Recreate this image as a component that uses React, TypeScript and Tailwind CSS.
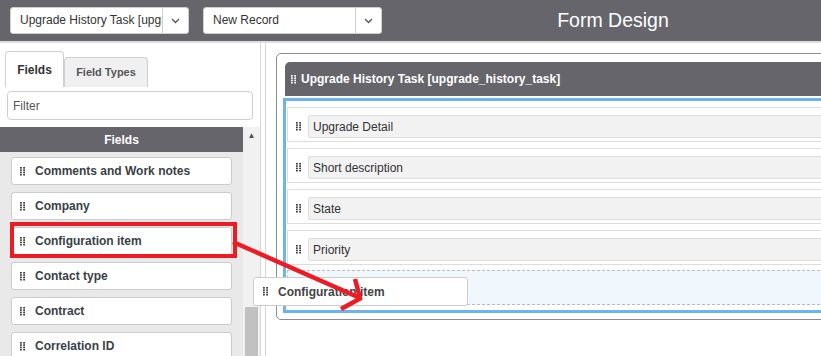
import * as React from "react"

const DARK = "bg-[#66656b]"

function Grip({ color = "#3c3c3c" }: { color?: string }) {
  const dots: React.ReactElement[] = []
  for (let r = 0; r < 4; r++) {
    for (let c = 0; c < 2; c++) {
      dots.push(<rect key={`${r}-${c}`} x={c * 3.2} y={r * 2.3} width={1.8} height={1.6} fill={color} />)
    }
  }
  return (
    <svg width="5" height="9" viewBox="0 0 5 9" className="shrink-0">
      {dots}
    </svg>
  )
}

function Chevron() {
  return (
    <svg width="9" height="6" viewBox="0 0 9 6">
      <path d="M1 1 L4.5 4.5 L8 1" fill="none" stroke="#555" strokeWidth="1.3" />
    </svg>
  )
}

function Select({ label }: { label: string }) {
  return (
    <div className="flex h-[27px] w-[179px] overflow-hidden rounded-[3px] border border-[#cfcfcf] bg-white">
      <div className="min-w-0 flex-1 overflow-hidden whitespace-nowrap pl-[9px] text-[12px] leading-[25px] text-[#333]">
        {label}
      </div>
      <div className="flex w-[26px] shrink-0 items-center justify-center border-l border-[#cfcfcf]">
        <Chevron />
      </div>
    </div>
  )
}

const fields = [
  "Comments and Work notes",
  "Company",
  "Configuration item",
  "Contact type",
  "Contract",
  "Correlation ID",
]

const formRows = ["Upgrade Detail", "Short description", "State", "Priority"]

export default function App() {
  return (
    <div
      className="relative h-[356px] w-[821px] overflow-hidden bg-white"
      style={{ fontFamily: '"Liberation Sans", Arial, sans-serif' }}
    >
      {/* top bar */}
      <div className={`flex h-[41px] items-center pl-[10px] ${DARK}`}>
        <Select label="Upgrade History Task [upgrade_history_task]" />
        <div className="ml-[14px]">
          <Select label="New Record" />
        </div>
        <div className="flex-1 pl-[23px] text-center text-[19.5px] text-white">Form Design</div>
      </div>
      <div className="h-[2px] bg-[#dedede]" />

      <div className="flex h-[313px]">
        {/* left panel */}
        <div className="flex w-[261px] shrink-0 flex-col border-r border-[#d6d6d6]">
          <div className="flex shrink-0 items-end pl-[5px] pt-[8px]">
            <div className="flex h-[36px] w-[59px] items-center justify-center rounded-t-[4px] border border-b-0 border-[#cfcfcf] bg-white text-[12px] font-bold text-[#333]">
              Fields
            </div>
            <div className="flex h-[30px] w-[84px] items-center justify-center rounded-t-[4px] border border-b-0 border-[#cfcfcf] bg-[#f0f0f0] text-[11px] font-bold text-[#555]">
              Field Types
            </div>
          </div>
          <div className="ml-[7px] mt-[4px] flex h-[29px] w-[246px] shrink-0 items-center rounded-[4px] border border-[#cfcfcf] pl-[5px] text-[12px] text-[#555]">
            Filter
          </div>
          <div className="mt-[7px] flex min-h-0 flex-1 overflow-hidden">
            <div className="flex w-[243px] flex-col">
              <div className={`flex h-[25px] shrink-0 items-center justify-center text-[12px] font-bold text-white ${DARK}`}>
                Fields
              </div>
              <div className="flex flex-1 flex-col gap-[7px] bg-[#e9e9e9] px-[11px] pt-[5px]">
                {fields.map((f) => (
                  <div
                    key={f}
                    className="flex h-[28px] shrink-0 items-center gap-[10px] rounded-[3px] border border-[#cccccc] bg-white pl-[8px] text-[12px] font-bold text-[#3a3f47]"
                  >
                    <Grip />
                    {f}
                  </div>
                ))}
              </div>
            </div>
            <div className="flex w-[17px] flex-col bg-[#f1f1f1]">
              <div className="flex h-[17px] shrink-0 items-center justify-center text-[8px] text-[#505050]">▲</div>
              <div className="h-[163px] shrink-0" />
              <div className="mx-[2px] h-[60px] shrink-0 bg-[#c1c1c1]" />
            </div>
          </div>
        </div>

        {/* splitter */}
        <div className="w-[5px] shrink-0 border-r border-[#d6d6d6]" />

        {/* main area */}
        <div className="min-w-0 flex-1 pl-[10px] pt-[10px]">
          <div className="w-[600px] rounded-[5px] border border-[#8c8c8c] pb-[6px] pl-[6px] pt-[8px]">
            <div className={`ml-[2px] flex h-[34px] items-center gap-[5px] rounded-t-[5px] pl-[6px] text-[12px] font-bold text-white ${DARK}`}>
              <Grip color="#ffffff" />
              Upgrade History Task [upgrade_history_task]
            </div>
            <div className="mt-[2px] flex flex-col border-[3px] border-r-0 border-[#6cb4ea] pb-[5px] pl-[1px] pt-[6px]">
              {formRows.map((r) => (
                <div
                  key={r}
                  className="mb-[6px] flex h-[35px] items-start gap-[7px] border border-r-0 border-[#dddddd] bg-white pl-[8px] pt-[7px]"
                >
                  <div className="pt-[7px]">
                    <Grip />
                  </div>
                  <div className="flex h-[23px] flex-1 items-center rounded-l-[3px] border border-r-0 border-[#dddddd] bg-[#f2f2f2] pl-[4px] text-[12px] text-[#333]">
                    {r}
                  </div>
                </div>
              ))}
              <div className="-mt-[1px] h-[35px] border border-r-0 border-dashed border-[#bbbbbb] bg-[#f0f8fe]" />
            </div>
          </div>
        </div>
      </div>

      {/* dragged ghost */}
      <div className="absolute left-[253px] top-[277px] flex h-[29px] w-[215px] items-center gap-[10px] rounded-[3px] border border-[#cccccc] bg-white pl-[9px] text-[12px] font-bold text-[#444]">
        <Grip />
        Configuration item
      </div>

      {/* annotation */}
      <div className="absolute left-[10px] top-[222px] h-[36px] w-[227px] border-[4px] border-[#ed1c24]" />
      <svg className="pointer-events-none absolute left-0 top-0" width="821" height="356">
        <g stroke="#ed1c24" strokeWidth="4.5" fill="none">
          <line x1="233" y1="242" x2="360" y2="298" />
          <line x1="355" y1="279" x2="360.5" y2="300" />
          <line x1="341" y1="309" x2="361" y2="298" />
        </g>
      </svg>
    </div>
  )
}
